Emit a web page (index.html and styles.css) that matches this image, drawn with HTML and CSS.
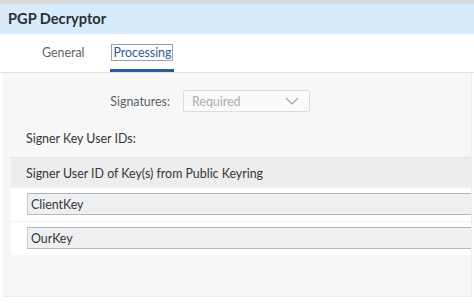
FILE: index.html
```html
<!DOCTYPE html>
<html lang="en">
<head>
  <meta charset="UTF-8">
  <title>PGP Decryptor</title>
  <link rel="stylesheet" href="styles.css">
</head>
<body>
  <div class="topline"></div>
  <div class="header">PGP Decryptor</div>

  <div class="tabs">
    <span class="tab">General</span>
    <span class="tab active"><span class="focus">Processing</span></span>
  </div>

  <div class="content">
    <div class="form-row">
      <span class="label">Signatures:</span>
      <div class="select">
        <span>Required</span>
        <svg width="14" height="8" viewBox="0 0 14 8"><path d="M1 1 L7 7 L13 1" fill="none" stroke="#9aa6b3" stroke-width="1.2"/></svg>
      </div>
    </div>

    <div class="section-title">Signer Key User IDs:</div>

    <div class="table">
      <div class="table-head">Signer User ID of Key(s) from Public Keyring</div>
      <div class="table-row"><div class="input">ClientKey</div></div>
      <div class="table-row"><div class="input">OurKey</div></div>
    </div>
  </div>
</body>
</html>
```

FILE: styles.css
```css
body {
  margin: 0;
  background: #fff;
  color: #32363a;
  font-family: Lato, "Open Sans", sans-serif;
  font-size: 12.4px;
  width: 474px;
  overflow: hidden;
}

.topline {
  height: 4px;
  background: #d9d9d9;
}

.header {
  height: 30px;
  line-height: 30px;
  padding-left: 8px;
  background: #d7ebfb;
  font-size: 14.6px;
  font-weight: bold;
  color: #2b2f33;
}

.tabs {
  height: 38px;
  display: flex;
  align-items: flex-end;
  gap: 26px;
  padding-left: 42px;
  border-bottom: 1px solid #e2e2e2;
}

.tab {
  color: #5f6368;
  padding-bottom: 9px;
  line-height: 20px;
}

.tab.active {
  color: #2c5a93;
  border-bottom: 3px solid #2a5d9c;
  padding: 0 1px 6px;
}

.focus {
  border: 1px solid #9aa0a6;
  padding: 0 1px;
}

.content {
  background: #f7f7f7;
  height: 223px;
  margin: 0 2px 0 3px;
  border-bottom: 1px solid #ececec;
  border-right: 1px solid #eeeeee;
}

.form-row {
  display: flex;
  align-items: center;
  padding-top: 17px;
  height: 22px;
}

.label {
  width: 167px;
  text-align: right;
  color: #5b5f63;
  margin-right: 13px;
}

.select {
  height: 22px;
  border: 1px solid #dcdcdc;
  border-radius: 2px;
  background: #fafafa;
  display: flex;
  align-items: center;
  justify-content: space-between;
  padding: 0 10px 0 8px;
  box-sizing: border-box;
  width: 127px;
  color: #a9acaf;
}

.section-title {
  padding: 18px 0 0 23px;
  height: 27px;
  line-height: 18px;
}

.table {
  margin-left: 8px;
}

.table-head {
  height: 29px;
  line-height: 31px;
  padding-left: 15px;
  background: #ededed;
  border-top: 1px solid #e4e4e4;
}

.table-row {
  background: #fff;
  padding: 5px 0 6px 16px;
  border-top: 1px solid #f0f0f0;
}

.input {
  height: 20px;
  line-height: 21px;
  padding-left: 3px;
  background: #eeeff0;
  border-top: 1px solid #b3b3b3;
  border-bottom: 1px solid #b8b8b8;
  border-left: 1px solid #c8c8c8;
  color: #32363a;
}
```
